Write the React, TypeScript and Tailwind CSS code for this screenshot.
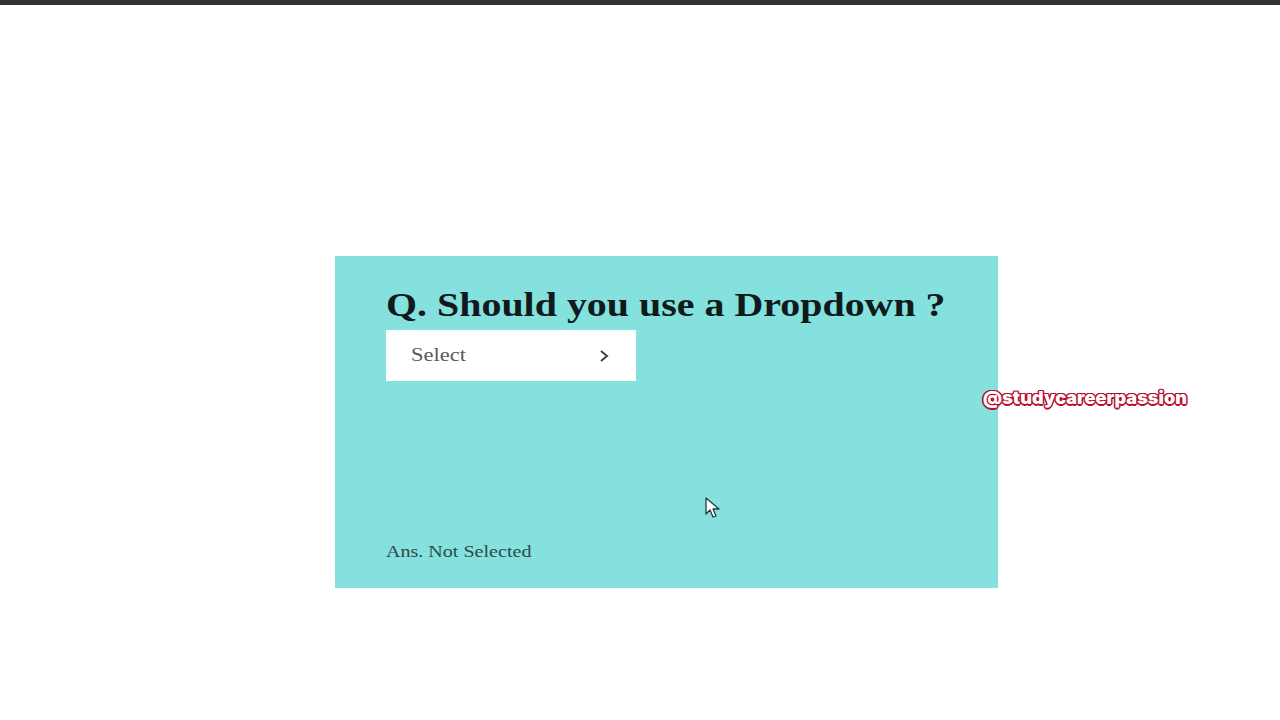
import React from 'react'

function Cursor() {
  return (
    <svg width="16" height="22" viewBox="0 0 16 22" className="absolute left-[705px] top-[497px]">
      <path d="M1 1 L1 17 L5 13 L8 20 L11 19 L8 12 L14 12 Z" fill="#ffffff" stroke="#2b3a3a" strokeWidth="1.3" strokeLinejoin="round" />
    </svg>
  )
}

export default function App() {
  return (
    <div className="relative w-[1280px] h-[720px] bg-white overflow-hidden">
      <div className="h-[5px] bg-[#333333]" />
      <div className="pt-[251px] pl-[335px]">
        <div className="w-[663px] h-[332px] bg-[#84e1de] px-[51px] pt-[27px] pb-[24px] flex flex-col items-start">
          <h1 className="inline-block origin-left scale-x-[1.21] font-['Liberation_Serif',serif] font-bold text-[33px] leading-[44px] text-[#111a1a] whitespace-nowrap">
            Q. Should you use a Dropdown ?
          </h1>
          <button className="mt-[3px] w-[250px] h-[51px] bg-white flex items-center justify-between pl-[25px] pr-[26px]">
            <span className="inline-block origin-left scale-x-[1.25] font-['Liberation_Serif',serif] text-[18px] text-[#5a5a5a]">Select</span>
            <svg width="12" height="14" viewBox="0 0 12 14">
              <path d="M3 2 L9 7 L3 12" fill="none" stroke="#444444" strokeWidth="2" />
            </svg>
          </button>
          <div className="mt-auto inline-block origin-left scale-x-[1.18] font-['Liberation_Serif',serif] text-[17px] text-[#2e4a4a] whitespace-nowrap">
            Ans. Not Selected
          </div>
        </div>
      </div>
      <Cursor />
      <div className="absolute left-[983px] top-[384px] font-['Inter',sans-serif] font-black text-[18px] tracking-[0.1px] text-white [text-shadow:1.5px_0_0_#b80d2b,-1.5px_0_0_#b80d2b,0_1.5px_0_#b80d2b,0_-1.5px_0_#b80d2b,1px_1px_0_#b80d2b,-1px_-1px_0_#b80d2b,1px_-1px_0_#b80d2b,-1px_1px_0_#b80d2b]">
        @studycareerpassion
      </div>
    </div>
  )
}
